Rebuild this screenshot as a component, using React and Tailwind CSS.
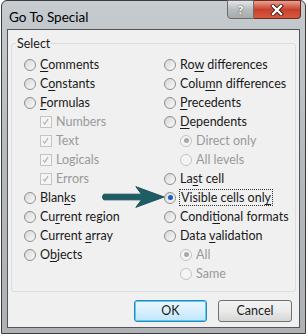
const font = { fontFamily: 'Lato, "Liberation Sans", sans-serif' };

function Radio({ checked, disabled }) {
  return (
    <span
      className={`relative inline-block w-[12px] h-[12px] rounded-full border shrink-0 ${
        disabled ? 'border-[#c4c4c4] bg-[#f4f4f4]' : 'border-[#8e8f8f] bg-gradient-to-br from-[#d6d6d6] to-[#fbfbfb]'
      }`}
    >
      {checked && (
        <span
          className={`absolute left-[2.5px] top-[2.5px] w-[5px] h-[5px] rounded-full ${
            disabled ? 'bg-[#a8a8a8]' : 'bg-[#1c5fb8]'
          }`}
        />
      )}
    </span>
  );
}

function Check() {
  return (
    <span className="relative inline-block w-[12px] h-[12px] border border-[#c4c4c4] bg-[#f4f4f4] shrink-0">
      <svg viewBox="0 0 12 12" className="absolute inset-0 w-[10px] h-[10px]">
        <path d="M2.5 6 L4.5 8.5 L8.5 2.5" fill="none" stroke="#b0b0b0" strokeWidth="1.3" />
      </svg>
    </span>
  );
}

function Row({ label, u, indent, checked, disabled, check, focus }) {
  const i = label.indexOf(u);
  const text = u ? (
    <>
      {label.slice(0, i)}
      <span className="underline underline-offset-2">{u}</span>
      {label.slice(i + 1)}
    </>
  ) : (
    label
  );
  return (
    <div className={`flex items-center h-[19px] gap-[4px] whitespace-nowrap ${indent ? 'pl-[16px]' : ''}`}>
      {check ? <Check /> : <Radio checked={checked} disabled={disabled} />}
      <span
        className={`leading-[15px] ${disabled ? 'text-[#9a9a9a]' : 'text-[#1a1a1a]'} ${
          focus ? 'outline-1 outline-dotted outline-[#333] px-[1px]' : ''
        }`}
      >
        {text}
      </span>
    </div>
  );
}

export default function App() {
  return (
    <div className="w-[308px] h-[336px] bg-white overflow-hidden text-[12.5px]" style={font}>
      <div className="relative ml-[1px] w-[305px] h-[334px] rounded-t-[6px] border border-[#3c3c3c] bg-gradient-to-b from-[#c6cbd0] via-[#b4b9be] to-[#aeb2b6] flex flex-col">
        {/* title bar */}
        <div className="h-[28px] flex items-start pl-[7px] pt-[6px] text-[13.5px] text-black">
          Go To Special
        </div>
        <div className="absolute right-[4px] top-[-1px] flex">
          <div className="w-[27px] h-[19px] rounded-bl-[4px] border border-[#6b6b6b] bg-gradient-to-b from-[#e4e6e8] via-[#b9bcbf] to-[#a8abae] flex items-center justify-center text-white font-bold text-[12px] leading-none" style={{ textShadow: '0 0 2px #333' }}>
            ?
          </div>
          <div className="w-[47px] h-[19px] rounded-br-[4px] border border-l-0 border-[#6b2a20] bg-gradient-to-b from-[#e8a090] via-[#c8402c] to-[#d45a3e] flex items-center justify-center">
            <svg viewBox="0 0 14 12" className="w-[14px] h-[12px]">
              <path d="M3 2 L11 10 M11 2 L3 10" stroke="#3a1410" strokeWidth="4" strokeLinecap="square" />
              <path d="M3 2 L11 10 M11 2 L3 10" stroke="#fff" strokeWidth="2.4" strokeLinecap="square" />
            </svg>
          </div>
        </div>

        {/* client */}
        <div className="mx-[5px] mb-[5px] flex-1 border border-[#555] bg-[#f0f0f0] flex flex-col px-[2px] pt-[13px]">
          <div className="relative border border-[#d5dfe5] rounded-[3px] mx-[1px] pt-[11px] pb-[8px]">
            <span className="absolute left-[4px] top-[-9px] bg-[#f0f0f0] px-[1px] text-[#1a1a1a]">Select</span>
            <div className="grid grid-cols-[140px_1fr] pl-[12px]">
              <div>
                <Row label="Comments" u="C" />
                <Row label="Constants" u="o" />
                <Row label="Formulas" u="F" />
                <Row label="Numbers" indent check disabled />
                <Row label="Text" indent check disabled />
                <Row label="Logicals" indent check disabled />
                <Row label="Errors" indent check disabled />
                <Row label="Blanks" u="k" />
                <Row label="Current region" u="r" />
                <Row label="Current array" u="a" />
                <Row label="Objects" u="b" />
              </div>
              <div>
                <Row label="Row differences" u="w" />
                <Row label="Column differences" u="m" />
                <Row label="Precedents" u="P" />
                <Row label="Dependents" u="D" />
                <Row label="Direct only" indent checked disabled />
                <Row label="All levels" indent disabled />
                <Row label="Last cell" u="s" />
                <Row label="Visible cells only" u="y" checked focus />
                <Row label="Conditional formats" u="t" />
                <Row label="Data validation" u="v" />
                <Row label="All" indent checked disabled />
                <Row label="Same" indent disabled />
              </div>
            </div>
            {/* pointer arrow */}
            <svg viewBox="0 0 70 24" className="absolute left-[88px] top-[141px] w-[66px] h-[24px]">
              <path d="M4 9 L44 9 L38 1 L68 12 L38 23 L44 15 L4 15 Q1 12 4 9 Z" fill="#1d5e66" stroke="#174b52" strokeWidth="1" />
            </svg>
          </div>
          <div className="flex justify-end gap-[11px] mt-[8px] pr-[5px]">
            <button className="w-[73px] h-[22px] rounded-[3px] border border-[#3c7fb1] bg-gradient-to-b from-[#eaf6fd] via-[#d9f0fc] to-[#bee6fd] text-[#1a1a1a] shadow-[inset_0_0_0_1px_#48d2fb]">
              OK
            </button>
            <button className="w-[74px] h-[22px] rounded-[3px] border border-[#707070] bg-gradient-to-b from-[#f2f2f2] via-[#ebebeb] to-[#d6d6d6] text-[#1a1a1a]">
              Cancel
            </button>
          </div>
        </div>
      </div>
    </div>
  );
}
